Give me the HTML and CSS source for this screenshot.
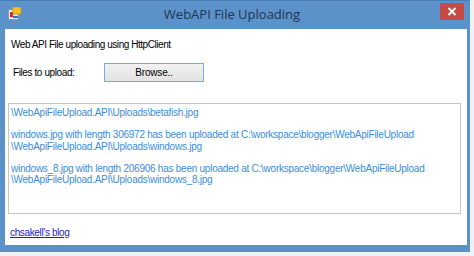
FILE: index.html
```html
<!DOCTYPE html>
<html>
<head>
<meta charset="utf-8">
<link rel="stylesheet" href="styles.css">
</head>
<body>
<div class="window">
  <div class="titlebar">
    <svg class="appicon" width="14" height="14" viewBox="0 0 14 14">
      <rect x="0.5" y="2.5" width="10" height="10" fill="#dfe6ee" stroke="#8a9ab0"/>
      <rect x="2" y="5" width="3" height="5" fill="#d02828"/>
      <rect x="5" y="0" width="8" height="7" fill="#f2c22a" stroke="#c89a10"/>
      <rect x="5" y="9" width="5" height="2" fill="#3a6fd0"/>
    </svg>
    <div class="title">WebAPI File Uploading</div>
    <div class="close">
      <svg width="10" height="9" viewBox="0 0 10 9"><path d="M1.5 1 L8.5 8 M8.5 1 L1.5 8" stroke="#fff" stroke-width="1.8"/></svg>
    </div>
  </div>
  <div class="client">
    <div class="heading">Web API File uploading using HttpClient</div>
    <div class="row">
      <span class="label">Files to upload:</span>
      <button class="browse">Browse..</button>
    </div>
    <div class="log">
      <div>\WebApiFileUpload.API\Uploads\betafish.jpg</div>
      <div>&nbsp;</div>
      <div>windows.jpg with length 306972 has been uploaded at C:\workspace\blogger\WebApiFileUpload</div>
      <div>\WebApiFileUpload.API\Uploads\windows.jpg</div>
      <div>&nbsp;</div>
      <div>windows_8.jpg with length 206906 has been uploaded at C:\workspace\blogger\WebApiFileUpload</div>
      <div>\WebApiFileUpload.API\Uploads\windows_8.jpg</div>
    </div>
    <a class="bloglink" href="#">chsakell's blog</a>
  </div>
</div>
</body>
</html>
```
FILE: styles.css
```css
html, body {
  margin: 0;
  padding: 0;
  background: #eef2f7;
  width: 474px;
  height: 256px;
  overflow: hidden;
}
.window {
  width: 462px;
  padding: 0 3px 7px 5px;
  background: #5b92ca;
  border-top: 1px solid #4a7db5;
}
.titlebar {
  height: 28px;
  display: flex;
  align-items: center;
}
.appicon {
  margin-left: 3px;
  margin-top: -3px;
}
.title {
  flex: 1;
  text-align: center;
  font-family: "Open Sans", sans-serif;
  font-size: 13px;
  color: #1f3550;
  margin-top: -3px;
  padding-left: 2px;
}
.close {
  width: 24px;
  height: 17px;
  background: #c74a45;
  display: flex;
  align-items: center;
  justify-content: center;
  align-self: flex-start;
  margin-top: 2px;
  margin-right: 3px;
}
.client {
  background: #fff;
  height: 216px;
  display: flex;
  flex-direction: column;
  font-family: "Liberation Sans", Arial, sans-serif;
  font-size: 10px;
  letter-spacing: -0.25px;
  color: #000;
}
.heading {
  margin: 9px 0 0 6px;
  line-height: 13px;
  letter-spacing: -0.45px;
}
.row {
  display: flex;
  align-items: center;
  margin-top: 12px;
  height: 19px;
}
.label {
  margin-left: 8px;
  width: 91px;
  letter-spacing: -0.4px;
}
.browse {
  width: 100px;
  height: 19px;
  border: 1px solid #78ace0;
  background: linear-gradient(#f2f2f2, #e2e2e2);
  font-family: "Liberation Sans", Arial, sans-serif;
  font-size: 10px;
  letter-spacing: -0.2px;
  color: #000;
  padding: 0;
}
.log {
  margin: 21px 0 0 3px;
  width: 449px;
  height: 106px;
  border: 1px solid #c6c6c6;
  padding: 3px 0 0 2px;
  color: #3a8de0;
  line-height: 11.2px;
  white-space: nowrap;
  overflow: hidden;
}
.bloglink {
  margin: 12px 0 0 5px;
  color: #2323c8;
  text-decoration: underline;
  line-height: 13px;
  align-self: flex-start;
  letter-spacing: -0.35px;
}
```
